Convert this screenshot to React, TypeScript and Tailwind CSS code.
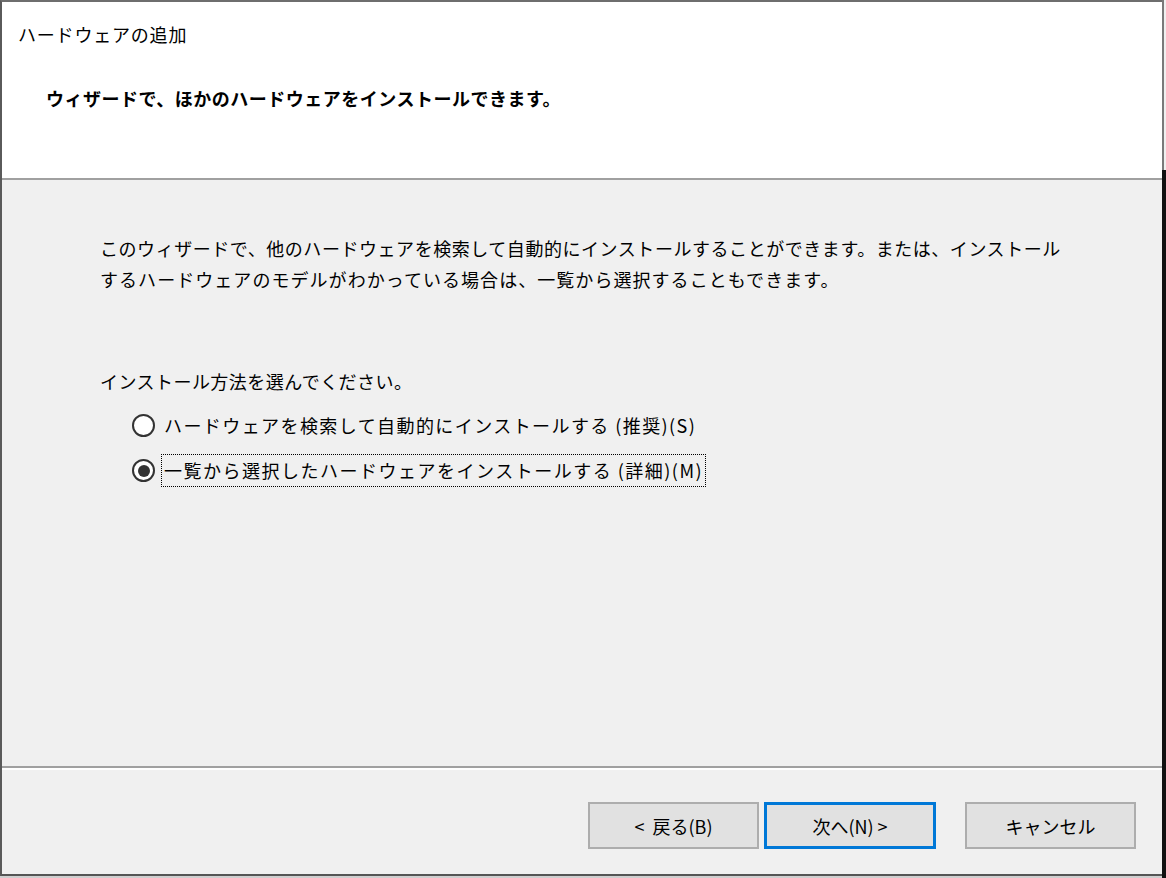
import React from "react";

function Radio({ checked }: { checked?: boolean }) {
  return (
    <div className="w-[23px] h-[23px] rounded-full border-2 border-[#333333] bg-white flex items-center justify-center shrink-0">
      {checked && <div className="w-[12px] h-[12px] rounded-full bg-[#333333]" />}
    </div>
  );
}

function Button({ label, primary, className }: { label: string; primary?: boolean; className?: string }) {
  return (
    <div
      className={
        "h-[47px] flex items-center justify-center bg-[#e1e1e1] text-[18px] leading-[26px] text-black whitespace-pre " +
        (primary ? "border-[3px] border-[#0078d7] " : "border-2 border-[#adadad] ") +
        (className ?? "")
      }
    >
      {label}
    </div>
  );
}

export default function App() {
  return (
    <div className="w-[1166px] h-[878px] flex bg-[#f0f0f0] font-['Noto_Sans_CJK_JP','Noto_Sans_CJK_SC',sans-serif] text-black overflow-hidden">
      <div className="w-[1162px] flex flex-col">
        <div className="h-[876px] flex flex-col border-l-2 border-t-2 border-b-2 border-l-[#5a5a5a] border-t-[#6e6e6e] border-b-[#555555]">
          {/* header */}
          <div className="h-[176px] bg-white pl-[16px] pt-[19px]">
            <div className="text-[18px] leading-[26px] tracking-[0.8px] whitespace-nowrap">ハードウェアの追加</div>
            <div className="mt-[38px] pl-[28px] text-[18px] leading-[26px] font-bold tracking-[0.5px] whitespace-nowrap">
              ウィザードで、ほかのハードウェアをインストールできます。
            </div>
          </div>
          <div className="h-[2px] bg-[#a0a0a0]" />
          {/* content */}
          <div className="h-[586px] bg-[#f0f0f0] pl-[98px] pt-[53px] text-[18px]">
            <p className="leading-[31px] whitespace-nowrap">
              <span className="tracking-[0.55px]">
                このウィザードで、他のハードウェアを検索して自動的にインストールすることができます。または、インストール
              </span>
              <br />
              <span className="tracking-[1.05px]">
                するハードウェアのモデルがわかっている場合は、一覧から選択することもできます。
              </span>
            </p>
            <p className="mt-[71px] leading-[31px] tracking-[0.45px] whitespace-nowrap">インストール方法を選んでください。</p>
            <div className="mt-[6px] flex flex-col">
              <div className="h-[45px] flex items-center pl-[32px]">
                <Radio />
                <span className="ml-[9px] leading-[27px] tracking-[1.42px] whitespace-nowrap">
                  ハードウェアを検索して自動的にインストールする (推奨)(S)
                </span>
              </div>
              <div className="h-[45px] flex items-center pl-[32px]">
                <Radio checked />
                <span className="ml-[6px] px-[2px] py-[2px] border border-dotted border-black leading-[27px] tracking-[1.5px] whitespace-nowrap">
                  一覧から選択したハードウェアをインストールする (詳細)(M)
                </span>
              </div>
            </div>
          </div>
          <div className="h-[2px] bg-[#a0a0a0]" />
          <div className="h-[2px] bg-white" />
          {/* footer */}
          <div className="flex-1 bg-[#f0f0f0] pt-[32px] pr-[26px] flex justify-end items-start">
            <Button label="<  戻る(B)" className="w-[171px]" />
            <Button label="次へ(N) >" primary className="w-[172px] ml-[5px]" />
            <Button label="キャンセル" className="w-[171px] ml-[29px]" />
          </div>
        </div>
        <div className="h-[2px] bg-[#cfcfcf]" />
      </div>
      <div className="w-[4px] flex flex-col">
        <div className="h-[170px] flex">
          <div className="w-[2px] bg-[#7a7a7a]" />
          <div className="w-[2px] bg-[#f0f0f0]" />
        </div>
        <div className="flex-1 bg-[#111111]" />
      </div>
    </div>
  );
}
